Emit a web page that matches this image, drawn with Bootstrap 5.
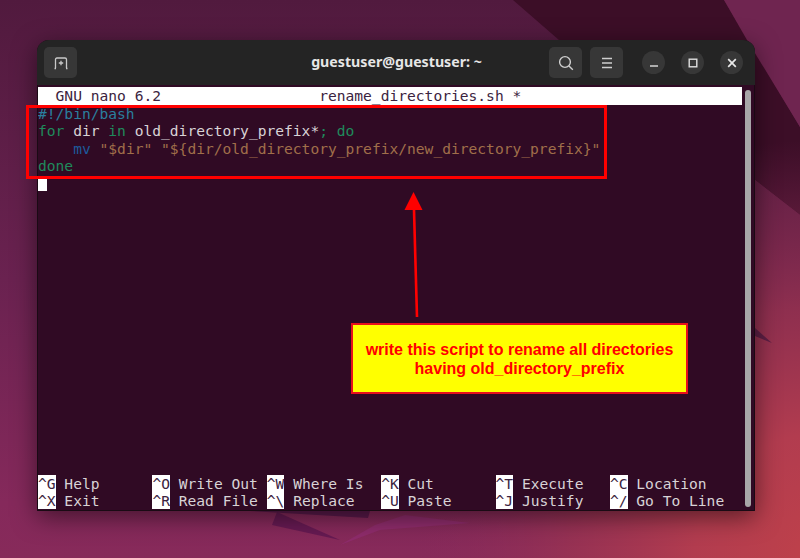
<!DOCTYPE html>
<html lang="en">
<head>
<meta charset="utf-8">
<title>guestuser@guestuser: ~</title>
<link href="https://cdn.jsdelivr.net/npm/bootstrap@5.3.0/dist/css/bootstrap.min.css" rel="stylesheet">
<style>
html,body{height:558px;overflow:hidden;background:#5a1c44}
.desk{width:800px;height:558px;padding:40px 45px 47px 37px;overflow:hidden}
.wall{left:0;top:0;width:800px;height:558px}
.termwin{height:471px;border-radius:12px 12px 0 0;background:#300a24;box-shadow:0 6px 24px rgba(0,0,0,.5);outline:1px solid #1a0a14;outline-offset:-1px;overflow:hidden;position:relative}
.headbar{height:45px;background:#242424;padding:7px 0 7px 7px;flex:none}
.hbtn{width:33px;height:31px;background:#373737;border-radius:5px}
.wintitle{font:700 14.2px/1 "Noto Sans",sans-serif;color:#e6e6e6;left:0;right:0;top:15px;padding-left:1px}
.rbtn{width:23px;height:23px;border-radius:50%;background:#373737}
.hgroup{gap:8px;margin-right:19px}
.rgroup{gap:16px;margin-right:12px}
.termbody{padding:2px 0 1px 1px;font:14.6px/17.55px "DejaVu Sans Mono",monospace;color:#d8d3d6;white-space:pre;flex:1 1 auto;min-height:0}
.nanotitle{background:#fff;color:#3b2340;width:704px;height:17.55px}
.spacer{flex:1 1 auto}
.keycell{width:114.4px}
.kbd-key{background:#fff;color:#3b2340}
.cur{display:block;width:9px;height:14px;background:#fff;margin-top:2px}
.c-teal{color:#2a7f9e}.c-green{color:#1f8a5c}.c-blue{color:#1c5a9c}.c-brown{color:#a06f4a}
.sbar{right:4px;top:50px;bottom:4px;width:6px;background:#a8a6a8;border-radius:3px}
.redbox{left:26px;top:105px;width:581px;height:74px;border:3px solid #f00}
.arrowsvg{left:400px;top:190px;width:30px;height:130px}
.notebox{left:351px;top:323px;width:337px;height:71px;background:#ff0;border:2px solid #e8101c;color:#f00;font:700 16px/19px "Liberation Sans",sans-serif}
</style>
</head>
<body class="m-0 p-0">
<div class="desk position-relative">
<svg class="wall position-absolute" viewBox="0 0 800 558" preserveAspectRatio="none">
<defs>
<linearGradient id="bgg" x1="0" y1="0" x2="0" y2="1">
<stop offset="0" stop-color="#511a3e"/><stop offset=".5" stop-color="#6a2250"/><stop offset=".9" stop-color="#85295b"/><stop offset="1" stop-color="#872a5a"/>
</linearGradient>
<radialGradient id="rg" gradientUnits="userSpaceOnUse" cx="820" cy="560" r="420">
<stop offset="0" stop-color="#bf414a"/><stop offset=".3" stop-color="#b23c4f"/><stop offset=".6" stop-color="#9a3352" stop-opacity=".8"/><stop offset="1" stop-color="#85295b" stop-opacity="0"/>
</radialGradient>
</defs>
<rect width="800" height="558" fill="url(#bgg)"/>
<polygon points="513,0 724,0 800,127 800,215 755,180 559,40" fill="#3c0e27"/>
<polygon points="724,0 800,0 800,127 747,40" fill="#6f2550"/>
<polygon points="755,180 800,215 800,558 755,558 700,300" fill="#5e1f40" opacity=".9"/>
<rect width="800" height="558" fill="url(#rg)"/>
<polygon points="755,328 772,343 755,336" fill="#5e1f45"/>
<polygon points="277,512 340,540 272,525" fill="#661a52"/>
<polygon points="340,545 375,525 405,515 470,523 380,530" fill="#8e2c6b"/>
<polygon points="250,511 370,511 368,518" fill="#5c1a4c"/>
</svg>
<div class="termwin d-flex flex-column">
<div class="headbar d-flex align-items-center position-relative">
<div class="hbtn d-flex align-items-center justify-content-center">
<svg width="16" height="16" viewBox="0 0 16 16" fill="none" stroke="#c9c9c9" stroke-width="1.3"><path d="M2.5 13V4.5Q2.5 3 4 3H12Q13.5 3 13.5 4.5V13M1.5 13.5H3M13 13.5H14.5"/><path d="M8 5.8V10.2M5.8 8H10.2"/></svg>
</div>
<div class="wintitle position-absolute text-center">guestuser@guestuser: ~</div>
<div class="ms-auto hgroup d-flex">
<div class="hbtn d-flex align-items-center justify-content-center">
<svg width="16" height="16" viewBox="0 0 16 16" fill="none" stroke="#cfcfcf" stroke-width="1.4"><circle cx="7" cy="7" r="5.4"/><path d="M11 11L14.8 14.8"/></svg>
</div>
<div class="hbtn d-flex align-items-center justify-content-center">
<svg width="12" height="12" viewBox="0 0 12 12" stroke="#cfcfcf" stroke-width="1.5"><path d="M1 1.5H11M1 6H11M1 10.5H11"/></svg>
</div>
</div>
<div class="rgroup d-flex">
<div class="rbtn d-flex align-items-center justify-content-center"><svg width="10" height="10" viewBox="0 0 10 10" stroke="#d6d6d6" stroke-width="1.6"><path d="M1 8H9"/></svg></div>
<div class="rbtn d-flex align-items-center justify-content-center"><svg width="10" height="10" viewBox="0 0 10 10" fill="none" stroke="#e0e0e0" stroke-width="1.4"><rect x="1.2" y="1.2" width="7.6" height="7.6"/></svg></div>
<div class="rbtn d-flex align-items-center justify-content-center"><svg width="10" height="10" viewBox="0 0 10 10" stroke="#e8e8e8" stroke-width="1.7"><path d="M1.2 1.2L8.8 8.8M8.8 1.2L1.2 8.8"/></svg></div>
</div>
</div>
<div class="termbody d-flex flex-column">
<div class="nanotitle">  GNU nano 6.2                  rename_directories.sh *</div>
<div class="c-teal">#!/bin/bash</div>
<div><span class="c-green">for</span> dir <span class="c-green">in</span> old_directory_prefix*<span class="c-green">; do</span></div>
<div>    <span class="c-blue">mv</span> <span class="c-brown">"$dir" "${dir/old_directory_prefix/new_directory_prefix}"</span></div>
<div class="c-green">done</div>
<span class="cur"></span>
<div class="spacer"></div>
<div class="d-flex"><div class="keycell"><span class="kbd-key">^G</span> Help</div><div class="keycell"><span class="kbd-key">^O</span> Write Out</div><div class="keycell"><span class="kbd-key">^W</span> Where Is</div><div class="keycell"><span class="kbd-key">^K</span> Cut</div><div class="keycell"><span class="kbd-key">^T</span> Execute</div><div class="keycell"><span class="kbd-key">^C</span> Location</div></div>
<div class="d-flex"><div class="keycell"><span class="kbd-key">^X</span> Exit</div><div class="keycell"><span class="kbd-key">^R</span> Read File</div><div class="keycell"><span class="kbd-key">^\</span> Replace</div><div class="keycell"><span class="kbd-key">^U</span> Paste</div><div class="keycell"><span class="kbd-key">^J</span> Justify</div><div class="keycell"><span class="kbd-key">^/</span> Go To Line</div></div>
</div>
<div class="sbar position-absolute"></div>
</div>
<div class="redbox position-absolute"></div>
<svg class="arrowsvg position-absolute" viewBox="0 0 30 130"><path d="M14 20L17 127" stroke="#f00" stroke-width="2.6"/><polygon points="13.5,2 22.5,20 4.5,20" fill="#f00"/></svg>
<div class="notebox position-absolute d-flex align-items-center justify-content-center text-center">write this script to rename all directories<br>having old_directory_prefix</div>
</div>
<script src="https://cdn.jsdelivr.net/npm/bootstrap@5.3.0/dist/js/bootstrap.bundle.min.js"></script>
</body>
</html>
